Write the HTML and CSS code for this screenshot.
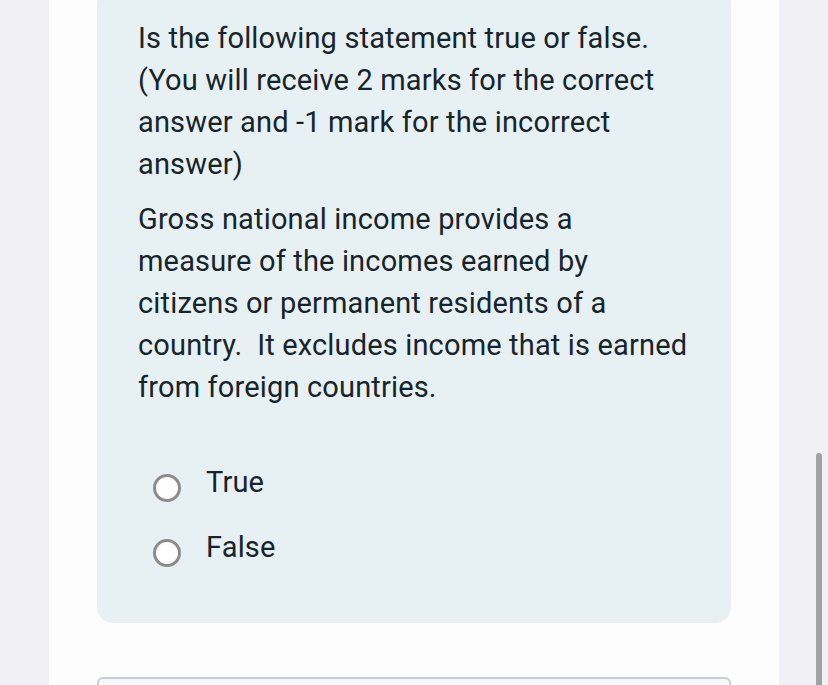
FILE: index.html
```html
<!DOCTYPE html>
<html>
<head>
<meta charset="utf-8">
<link rel="stylesheet" href="styles.css">
</head>
<body>
<div class="page">
  <div class="gutter"></div>
  <main class="panel">
    <section class="card">
      <p class="text">Is the following statement true or false. (You will receive 2 marks for the correct answer and -1 mark for the incorrect answer)</p>
      <p class="text para2">Gross national income provides a measure of the incomes earned by citizens or permanent residents of a country.&nbsp; It excludes income that is earned from foreign countries.</p>
      <div class="options">
        <label class="option"><span class="radio"></span><span class="label">True</span></label>
        <label class="option"><span class="radio"></span><span class="label">False</span></label>
      </div>
    </section>
    <div class="next-box"></div>
  </main>
  <div class="side"></div>
</div>
<div class="scrollbar"></div>
</body>
</html>
```
FILE: styles.css
```css
html, body {
  margin: 0;
  padding: 0;
  height: 100%;
  overflow: hidden;
}
body {
  background: #f1f1f5;
  font-family: Roboto, "Noto Sans", sans-serif;
  color: #17242b;
}
.page {
  display: flex;
  height: 685px;
  overflow: hidden;
}
.gutter {
  width: 49px;
  flex: none;
}
.panel {
  width: 730px;
  flex: none;
  background: #fdfdfd;
  padding: 0 48px;
  box-sizing: border-box;
}
.side {
  flex: 1;
}
.card {
  margin-top: -12px;
  background: #e7f1f3;
  border-radius: 16px;
  padding: 29px 42px 55px 41px;
}
.text {
  margin: 0;
  font-size: 29px;
  line-height: 42px;
  letter-spacing: 0.16px;
}
.para2 {
  margin-top: 13px;
}
.options {
  margin-top: 53px;
  display: flex;
  flex-direction: column;
  gap: 23px;
}
.option {
  display: flex;
  align-items: flex-start;
  font-size: 29px;
  line-height: 42px;
  letter-spacing: 0.16px;
}
.radio {
  width: 28px;
  height: 28px;
  box-sizing: border-box;
  border: 3px solid #8c8c8c;
  border-radius: 50%;
  background: #ffffff;
  margin: 13px 0 0 15px;
  flex: none;
}
.label {
  margin-left: 25px;
}
.next-box {
  margin-top: 54px;
  height: 40px;
  border: 2px solid #c9cdd5;
  border-radius: 6px;
  background: #f6f7f9;
}
.scrollbar {
  position: absolute;
  left: 816px;
  top: 453px;
  width: 6px;
  height: 232px;
  border-radius: 3px 3px 0 0;
  background: #a2a2a6;
}
```
